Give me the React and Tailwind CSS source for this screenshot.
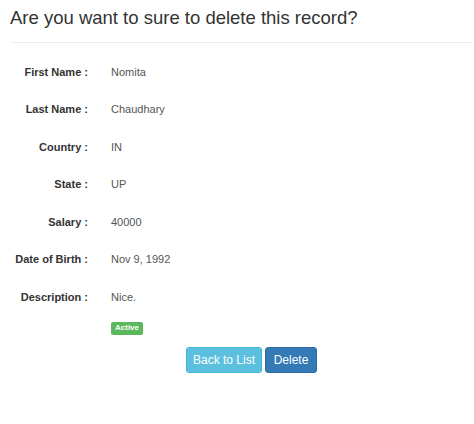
const record = [
  { label: "First Name", value: "Nomita" },
  { label: "Last Name", value: "Chaudhary" },
  { label: "Country", value: "IN" },
  { label: "State", value: "UP" },
  { label: "Salary", value: "40000" },
  { label: "Date of Birth", value: "Nov 9, 1992" },
  { label: "Description", value: "Nice." },
];

export default function App() {
  return (
    <div className="h-[424px] w-[474px] bg-white font-['Liberation_Sans',Arial,sans-serif] text-[#333]">
      <h3 className="pl-[10px] pt-[7px] text-[18.5px] leading-[22px]">
        Are you want to sure to delete this record?
      </h3>
      <hr className="ml-[10px] mr-[2px] mt-[13px] border-t border-[#eee]" />

      <div className="mt-[10px] flex flex-col">
        {record.map((row) => (
          <div key={row.label} className="flex h-[37.5px] items-center text-[11px]">
            <span className="w-[88px] text-right font-bold">{row.label} :</span>
            <span className="ml-[23px] text-[#555]">{row.value}</span>
          </div>
        ))}
      </div>

      <div className="ml-[111px] mt-[6px] flex">
        <span className="inline-flex h-[13px] items-center rounded-[2px] bg-[#5cb85c] px-[4px] text-[8px] font-bold text-white">
          Active
        </span>
      </div>

      <div className="ml-[186px] mt-[12px] flex gap-[3px]">
        <button className="h-[26px] w-[76px] rounded-[3px] border border-[#46b8da] bg-[#5bc0de] text-[12px] text-white">
          Back to List
        </button>
        <button className="h-[26px] w-[52px] rounded-[3px] border border-[#2e6da4] bg-[#337ab7] text-[12px] text-white">
          Delete
        </button>
      </div>
    </div>
  );
}
